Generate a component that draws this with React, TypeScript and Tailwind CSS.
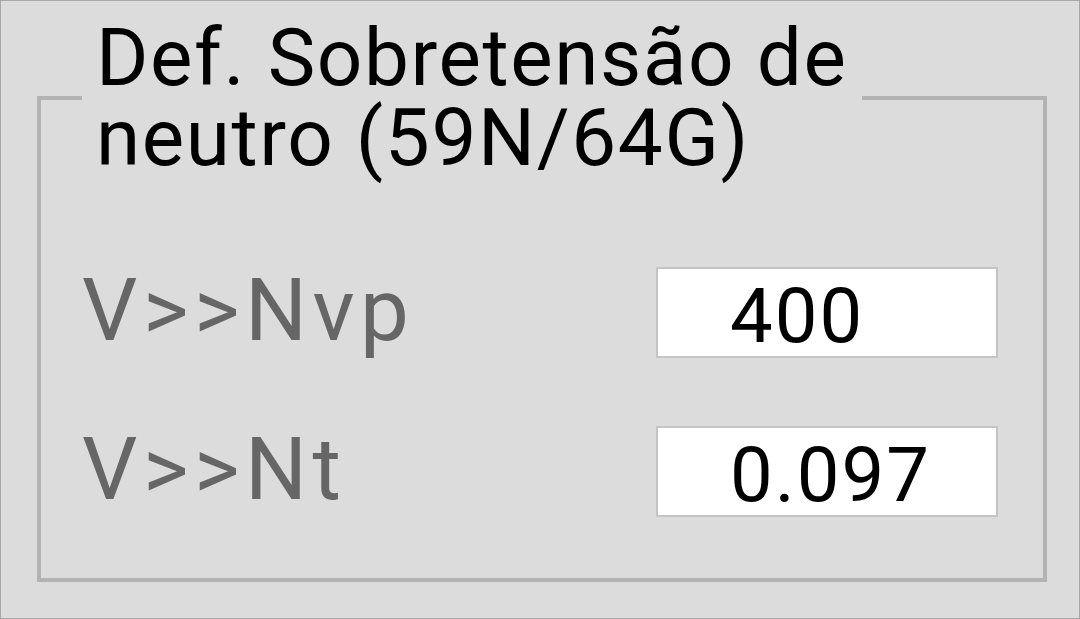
import React from "react";

export default function App() {
  return (
    <div
      className="w-[1080px] h-[619px] border border-[#a8a8a8] bg-[#dcdcdc] overflow-hidden"
      style={{ fontFamily: "Roboto, 'Noto Sans', sans-serif" }}
    >
      <fieldset className="ml-[36px] mt-[17px] w-[1010px] h-[564px] border-[4px] border-solid border-[#b3b3b3] pl-[41px] pr-[45px]">
        <legend className="px-[14px] text-[80px] leading-[80px] tracking-[1.6px] text-black -mt-[2px]">
          Def. Sobretensão de
          <br />
          neutro (59N/64G)
        </legend>
        <div className="flex flex-col gap-[68px] pt-[89px]">
          <Row label="V>>Nvp" value="400" />
          <Row label="V>>Nt" value="0.097" />
        </div>
      </fieldset>
    </div>
  );
}

function Row({ label, value }: { label: string; value: string }) {
  return (
    <div className="flex items-center justify-between">
      <div className="text-[87px] leading-none tracking-[5.5px] text-[#666666] pb-[4px]">{label}</div>
      <div className="w-[342px] h-[91px] bg-white border-2 border-[#c4c4c4] flex items-center pl-[72px] pt-[6px] text-[76px] leading-none tracking-[2px] text-black">
        {value}
      </div>
    </div>
  );
}
